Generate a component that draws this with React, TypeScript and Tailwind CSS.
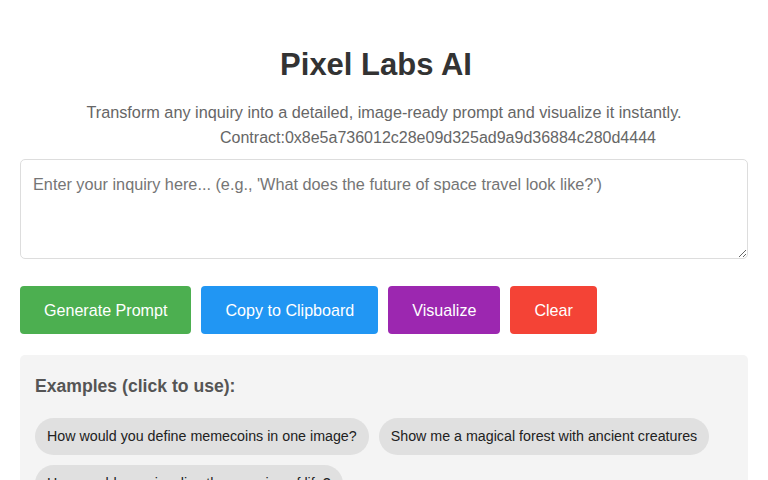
import { useState } from "react"

const examples = [
    "How would you define memecoins in one image?",
    "Show me a magical forest with ancient creatures",
    "How would you visualize the meaning of life?",
]

export default function App() {
    const [text, setText] = useState("")

    return (
        <div className="min-h-screen bg-white font-['Liberation_Sans',Arial,sans-serif] text-[#333]">
            <div className="max-w-[768px] mx-auto px-5 pt-[45px]">
                {/* ── Header ── */}
                <h1 className="pr-4 text-center text-[31px] leading-[40px] font-bold text-[#333]">Pixel Labs AI</h1>
                <p className="mt-[15px] text-center text-[16.25px] leading-6 text-[#666]">
                    Transform any inquiry into a detailed, image-ready prompt and visualize it instantly.
                </p>
                <p className="ml-[200px] mt-[2px] text-base leading-6 text-[#666]">
                    Contract:0x8e5a736012c28e09d325ad9a9d36884c280d4444
                </p>

                {/* ── Input ── */}
                <textarea
                    value={text}
                    onChange={(e) => setText(e.target.value)}
                    placeholder="Enter your inquiry here... (e.g., 'What does the future of space travel look like?')"
                    className="mt-[9px] block w-full h-[100px] p-3 text-[16.25px] leading-6 border border-[#ddd] rounded-[5px] placeholder:text-[#757575] outline-none"
                />

                {/* ── Actions ── */}
                <div className="mt-[27px] flex gap-[10px]">
                    <button className="h-12 px-6 rounded-[4px] bg-[#4CAF50] text-white text-[16.1px]">Generate Prompt</button>
                    <button className="h-12 px-6 rounded-[4px] bg-[#2196F3] text-white text-[16.1px]">Copy to Clipboard</button>
                    <button className="h-12 px-6 rounded-[4px] bg-[#9C27B0] text-white text-[16.1px]">Visualize</button>
                    <button className="h-12 px-6 rounded-[4px] bg-[#F44336] text-white text-[16.1px]">Clear</button>
                </div>

                {/* ── Examples ── */}
                <div className="mt-[21px] bg-[#f4f4f4] rounded-[5px] p-[15px]">
                    <h3 className="mt-[3px] text-[17.6px] leading-[26px] font-bold text-[#555]">Examples (click to use):</h3>
                    <div className="mt-[19px] flex flex-wrap gap-[10px]">
                        {examples.map((ex) => (
                            <button
                                key={ex}
                                onClick={() => setText(ex)}
                                className="h-[37px] px-3 rounded-full bg-[#e0e0e0] text-[14.25px] text-[#222]"
                            >
                                {ex}
                            </button>
                        ))}
                    </div>
                </div>
            </div>
        </div>
    )
}
